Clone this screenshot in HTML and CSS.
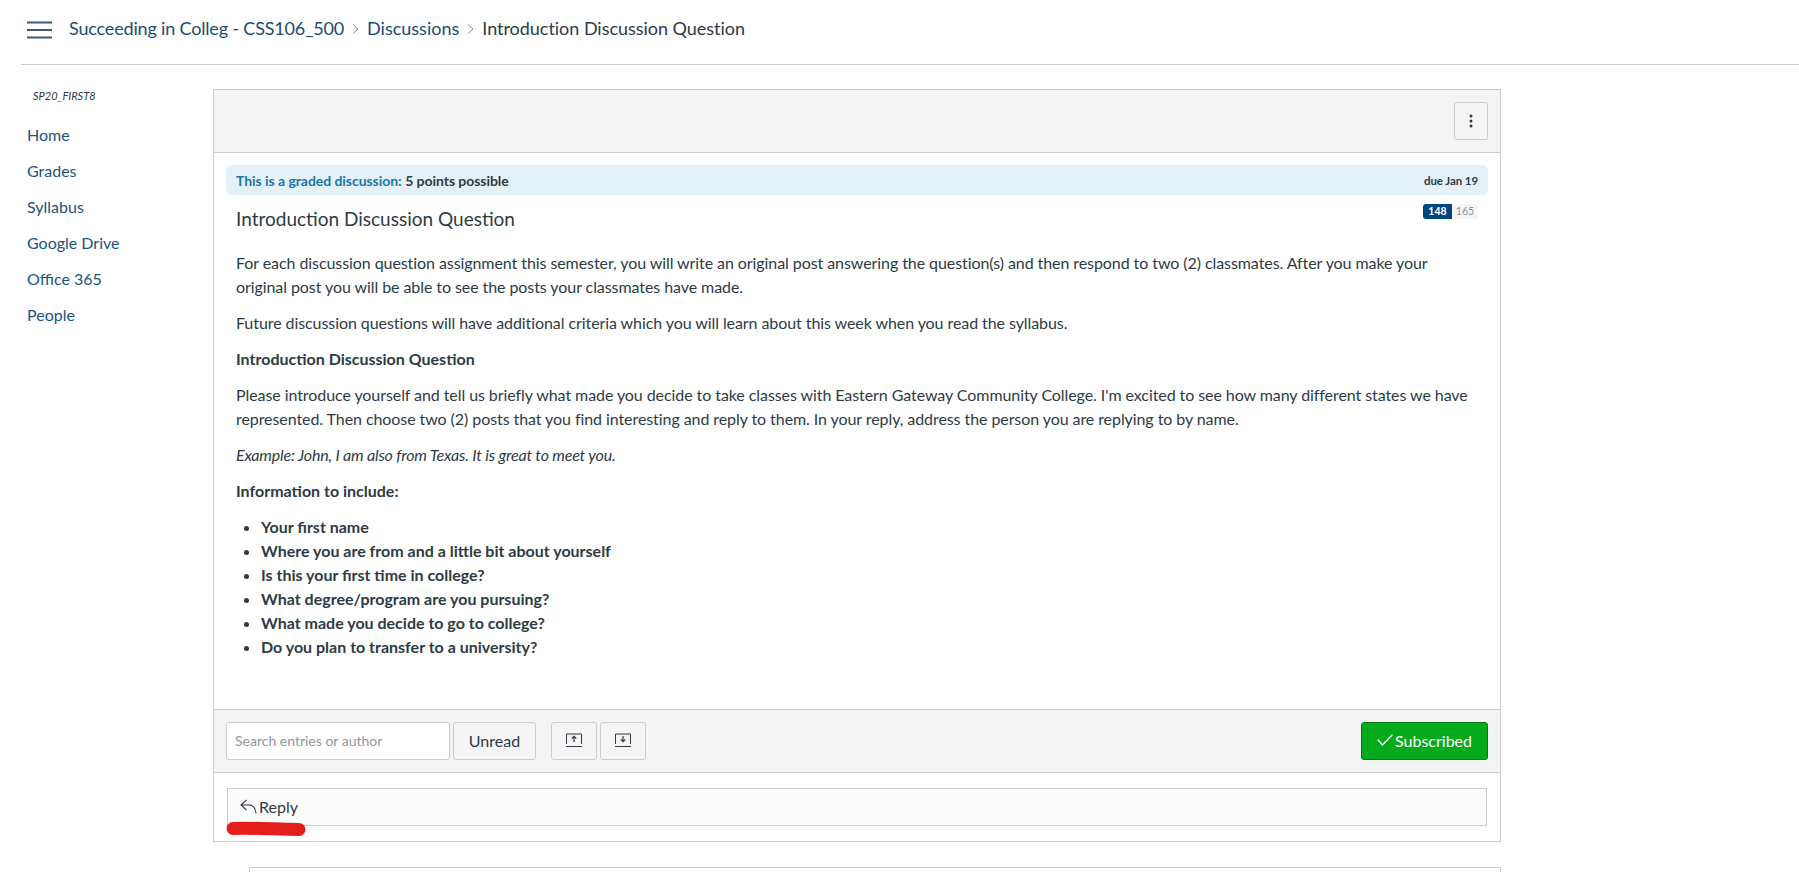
FILE: index.html
```html
<!DOCTYPE html>
<html lang="en">
<head>
<meta charset="utf-8">
<title>Introduction Discussion Question</title>
<link rel="stylesheet" href="styles.css">
</head>
<body>
<header class="topbar">
  <svg class="burger" width="25" height="18" viewBox="0 0 25 18"><path d="M0 1.500h25M0 9h25M0 16.500h25" stroke="#3f5878" stroke-width="2"/></svg>
  <nav class="crumbs">
    <a class="course">Succeeding in Colleg - CSS106_500</a>
    <svg class="sep" width="7" height="10" viewBox="0 0 7 10"><path d="M1 .5 6 5 1 9.500" fill="none" stroke="#8b969e"/></svg>
    <a>Discussions</a>
    <svg class="sep" width="7" height="10" viewBox="0 0 7 10"><path d="M1 .5 6 5 1 9.500" fill="none" stroke="#8b969e"/></svg>
    <span>Introduction Discussion Question</span>
  </nav>
</header>
<div class="layout">
  <aside class="side">
    <div class="term">SP20_FIRST8</div>
    <ul class="menu">
      <li>Home</li><li>Grades</li><li>Syllabus</li><li>Google Drive</li><li>Office 365</li><li>People</li>
    </ul>
  </aside>
  <main class="content">
    <section class="panel">
      <div class="toolbar">
        <button class="kebab" aria-label="More"><svg width="4" height="14" viewBox="0 0 4 14"><circle cx="2" cy="2" r="1.500"/><circle cx="2" cy="7" r="1.500"/><circle cx="2" cy="12" r="1.500"/></svg></button>
      </div>
      <div class="body">
        <div class="info"><span><b class="blue">This is a graded discussion:</b> <b>5 points possible</b></span><span class="due">due Jan 19</span></div>
        <div class="titlerow">
          <h1>Introduction Discussion Question</h1>
          <div class="badge"><span class="on">148</span><span class="off">165</span></div>
        </div>
        <div class="text">
          <p>For each discussion question assignment this semester, you will write an original post answering the question(s) and then respond to two (2) classmates. After you make your original post you will be able to see the posts your classmates have made.</p>
          <p>Future discussion questions will have additional criteria which you will learn about this week when you read the syllabus.</p>
          <p><strong>Introduction Discussion Question</strong></p>
          <p>Please introduce yourself and tell us briefly what made you decide to take classes with Eastern Gateway Community College. I'm excited to see how many different states we have represented. Then choose two (2) posts that you find interesting and reply to them. In your reply, address the person you are replying to by name.</p>
          <p><em>Example: John, I am also from Texas. It is great to meet you.</em></p>
          <p><strong>Information to include:</strong></p>
          <ul>
            <li>Your first name</li>
            <li>Where you are from and a little bit about yourself</li>
            <li>Is this your first time in college?</li>
            <li>What degree/program are you pursuing?</li>
            <li>What made you decide to go to college?</li>
            <li>Do you plan to transfer to a university?</li>
          </ul>
        </div>
      </div>
      <div class="filters">
        <input class="search" placeholder="Search entries or author">
        <button class="btn unread">Unread</button>
        <button class="btn square first" aria-label="Collapse"><svg width="16" height="14" viewBox="0 0 16 14"><path d="M.5 11V1h15v10M0 13.500h16" fill="none" stroke="#2d3b45"/><path d="M8 9V3.500M5.800 5.500 8 3.300l2.200 2.200" fill="none" stroke="#2d3b45" stroke-width="1.200"/></svg></button>
        <button class="btn square" aria-label="Expand"><svg width="16" height="14" viewBox="0 0 16 14"><path d="M.5 11V1h15v10M0 13.500h16" fill="none" stroke="#2d3b45"/><path d="M8 3v5.500M5.800 6.500 8 8.700l2.200-2.200" fill="none" stroke="#2d3b45" stroke-width="1.200"/></svg></button>
        <button class="subscribed"><svg width="16" height="12" viewBox="0 0 16 12"><path d="M.7 5.500 5.500 11 15.300.700" fill="none" stroke="#fff" stroke-width="1.300"/></svg>Subscribed</button>
      </div>
      <div class="replywrap">
        <div class="reply"><svg width="17" height="15" viewBox="0 0 17 15"><path d="M6.500 1 1 6l5.500 5M1 6h8c4 0 6.500 3 7 8.500" fill="none" stroke="#2d3b45" stroke-width="1.100"/></svg>Reply</div>
        <svg class="scribble" width="80" height="16" viewBox="0 0 80 16"><path d="M7 7.500c20-1 45 1 66 1" fill="none" stroke="#e31c1c" stroke-width="13" stroke-linecap="round"/></svg>
      </div>
    </section>
    <section class="next"></section>
  </main>
</div>
</body>
</html>
```

FILE: styles.css
```css
* { box-sizing: border-box; }
html, body { margin: 0; height: 100%; overflow: hidden; background: #fff; }
body { font-family: Lato, "Open Sans", sans-serif; color: #2d3b45; font-size: 16px; }
.topbar { height: 65px; margin-left: 21px; border-bottom: 1px solid #c7cdd1; display: flex; align-items: center; padding-left: 6px; padding-bottom: 5px; }
.burger { margin-right: 17px; }
.crumbs { display: flex; align-items: center; font-size: 18px; margin-bottom: 4px; }
.crumbs a { color: #1a4d70; }
.crumbs span { color: #2d3b45; letter-spacing: -0.03px; }
.course { letter-spacing: -0.17px; }
.sep { margin: 2px 8px 0; }
.layout { display: flex; }
.side { width: 213px; padding: 24px 0 0 27px; flex: none; }
.term { font-size: 11px; font-style: italic; color: #2d3b45; margin-left: 6px; line-height: 14px; }
.menu { list-style: none; margin: 14px 0 0; padding: 0; color: #1a5480; }
.menu li { height: 36px; line-height: 36px; }
.content { flex: none; width: 1288px; padding-top: 24px; }
.panel { border: 1px solid #c7cdd1; height: 753px; display: flex; flex-direction: column; }
.toolbar { height: 63px; flex: none; background: #f4f4f4; border-bottom: 1px solid #c7cdd1; display: flex; justify-content: flex-end; align-items: center; padding-right: 12px; }
.kebab { width: 34px; height: 38px; padding: 0; background: #f5f5f5; border: 1px solid #c7cdd1; border-radius: 3px; display: flex; align-items: center; justify-content: center; fill: #2d3b45; }
.body { flex: 1; padding: 12px 12px 0 12px; }
.info { height: 30px; background: #e5f1f8; border-radius: 6px; display: flex; justify-content: space-between; align-items: center; padding: 0 10px; font-size: 14px; letter-spacing: -0.05px; }
.info b { font-weight: 700; }
.blue { color: #1a75a8; }
.due { font-size: 11.500px; font-weight: 700; letter-spacing: -0.08px; }
.titlerow { display: flex; justify-content: space-between; padding: 9px 10px 0; height: 52px; }
h1 { margin: 0; font-size: 19px; font-weight: 400; line-height: 30px; color: #2d3b45; }
.badge { display: flex; height: 15px; font-size: 10.500px; line-height: 15px; text-align: center; }
.on { width: 29px; background: #00467f; color: #fff; font-weight: 700; border-radius: 3px 0 0 3px; }
.off { width: 26px; background: #f5f5f5; color: #8b969e; border-radius: 0 3px 3px 0; }
.text { padding: 4px 10px 0; line-height: 24px; letter-spacing: -0.075px; }
.text p { margin: 0 0 12px; }
.text strong { letter-spacing: 0; }
.text em { letter-spacing: -0.19px; }
.text ul { margin: 0; padding-left: 25px; font-weight: 700; letter-spacing: 0; }
.filters { height: 64px; flex: none; background: #f4f4f4; border-top: 1px solid #c7cdd1; border-bottom: 1px solid #c7cdd1; display: flex; align-items: center; padding: 0 12px; }
.search { width: 224px; height: 38px; border: 1px solid #c7cdd1; border-radius: 3px; padding: 0 8px 2px; font: 14px Lato, sans-serif; background: #fff; }
.search::placeholder { color: #8f979d; }
.btn { height: 38px; background: #f5f5f5; border: 1px solid #c7cdd1; border-radius: 3px; font: 16px Lato, sans-serif; color: #2d3b45; padding: 0 0 2px; display: flex; align-items: center; justify-content: center; }
.unread { width: 83px; margin-left: 3px; }
.square { width: 46px; margin-left: 3px; }
.first { margin-left: 15px; }
.subscribed { margin-left: auto; width: 127px; height: 38px; background: #03ab1c; border: 1px solid #04780f; border-radius: 3px; color: #fff; font: 16px Lato, sans-serif; display: flex; align-items: center; justify-content: center; gap: 2px; padding: 0 0 2px; }
.replywrap { position: relative; flex: none; height: 68px; padding: 15px 13px 0 13px; }
.reply { height: 38px; background: #fcfcfc; border: 1px solid #c7cdd1; display: flex; align-items: center; padding: 0 0 2px 12px; gap: 2px; color: #2d3b45; }
.scribble { position: absolute; left: 12px; top: 48px; }
.next { height: 80px; margin: 25px 0 0 36px; border: 1px solid #c7cdd1; }
```
